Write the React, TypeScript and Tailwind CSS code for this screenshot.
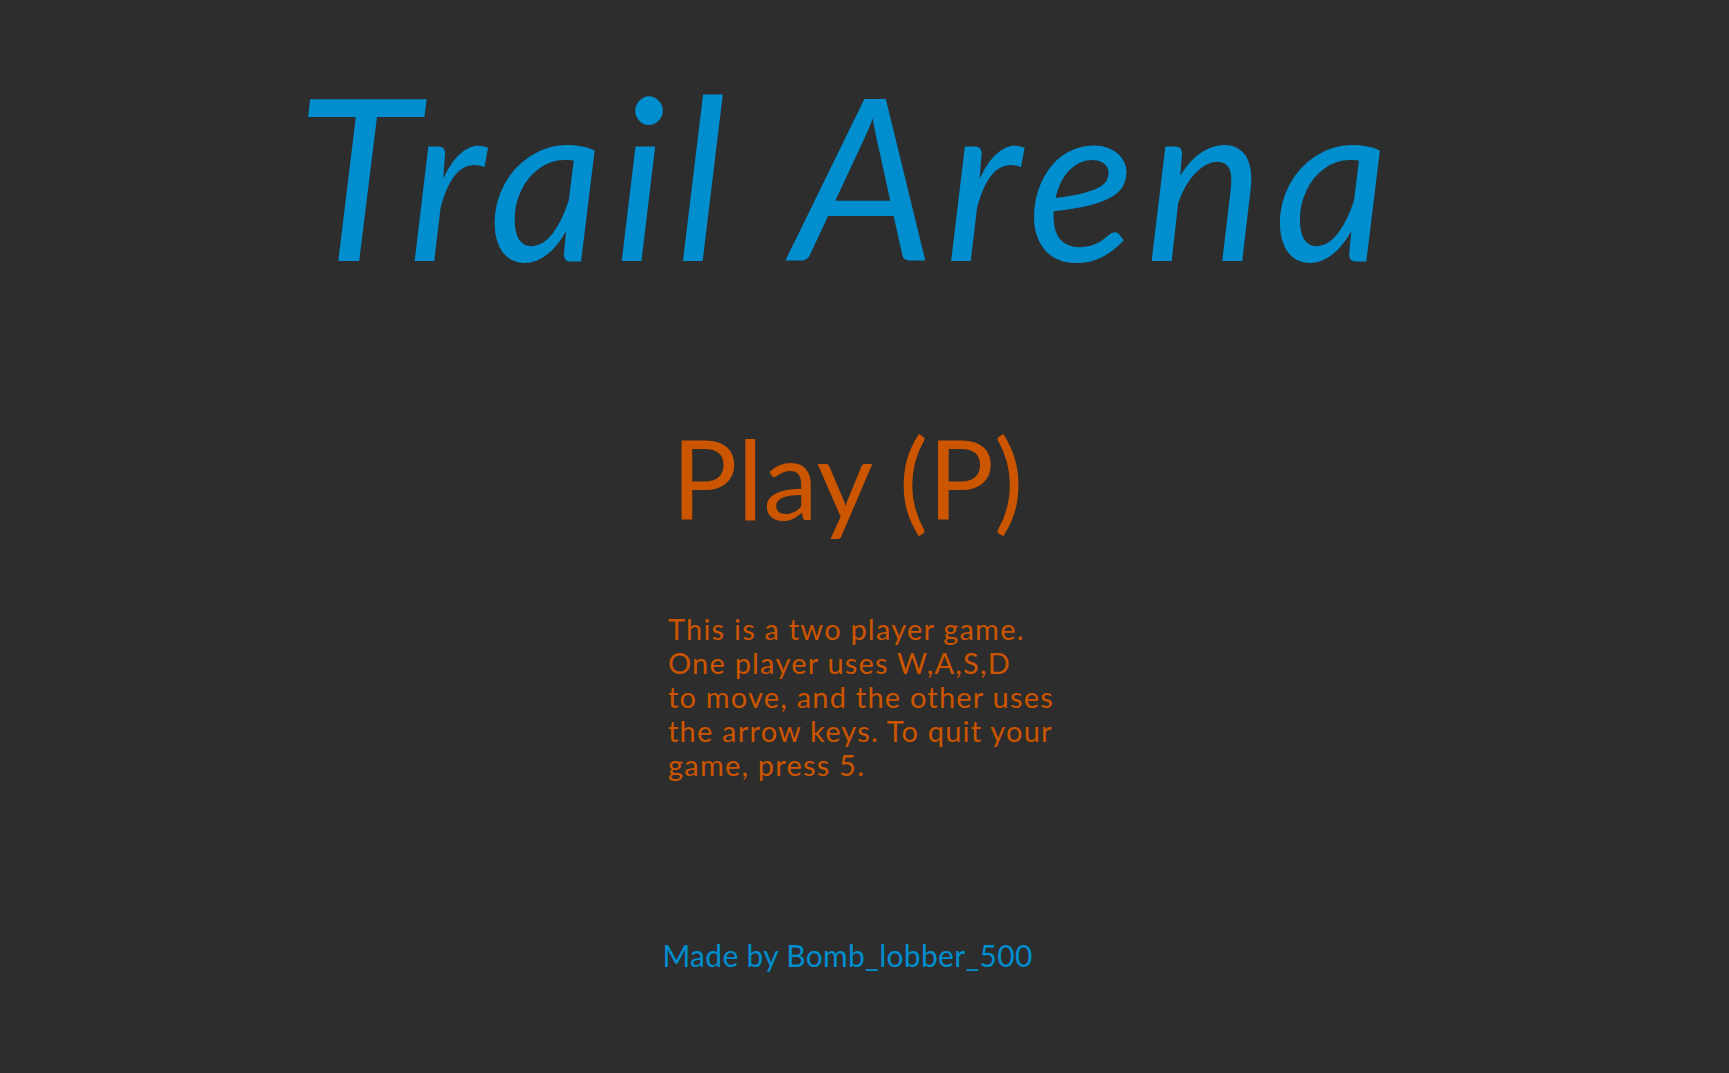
export default function App() {
  return (
    <div className="min-h-screen w-full bg-[#2d2d2d] flex flex-col items-center font-['Lato','Noto_Sans',sans-serif]">
      <div className="flex flex-col items-center pr-[34px]">
        <h1 className="mt-[62px] text-[225px] leading-none italic font-normal tracking-[10px] text-[#008ecf]">
          Trail Arena
        </h1>
        <button className="mt-[135px] text-[110px] leading-none text-[#cc5500]">
          Play (P)
        </button>
        <p className="mt-[80px] w-[400px] ml-[41px] text-[29px] leading-[34px] tracking-[1.2px] text-[#cc5500]">
          This is a two player game.
          <br />
          One player uses W,A,S,D
          <br />
          to move, and the other uses
          <br />
          the arrow keys. To quit your
          <br />
          game, press 5.
        </p>
        <p className="mt-[158px] text-[30px] leading-none tracking-[0.3px] text-[#008ecf]">
          Made by Bomb_lobber_500
        </p>
      </div>
    </div>
  );
}
